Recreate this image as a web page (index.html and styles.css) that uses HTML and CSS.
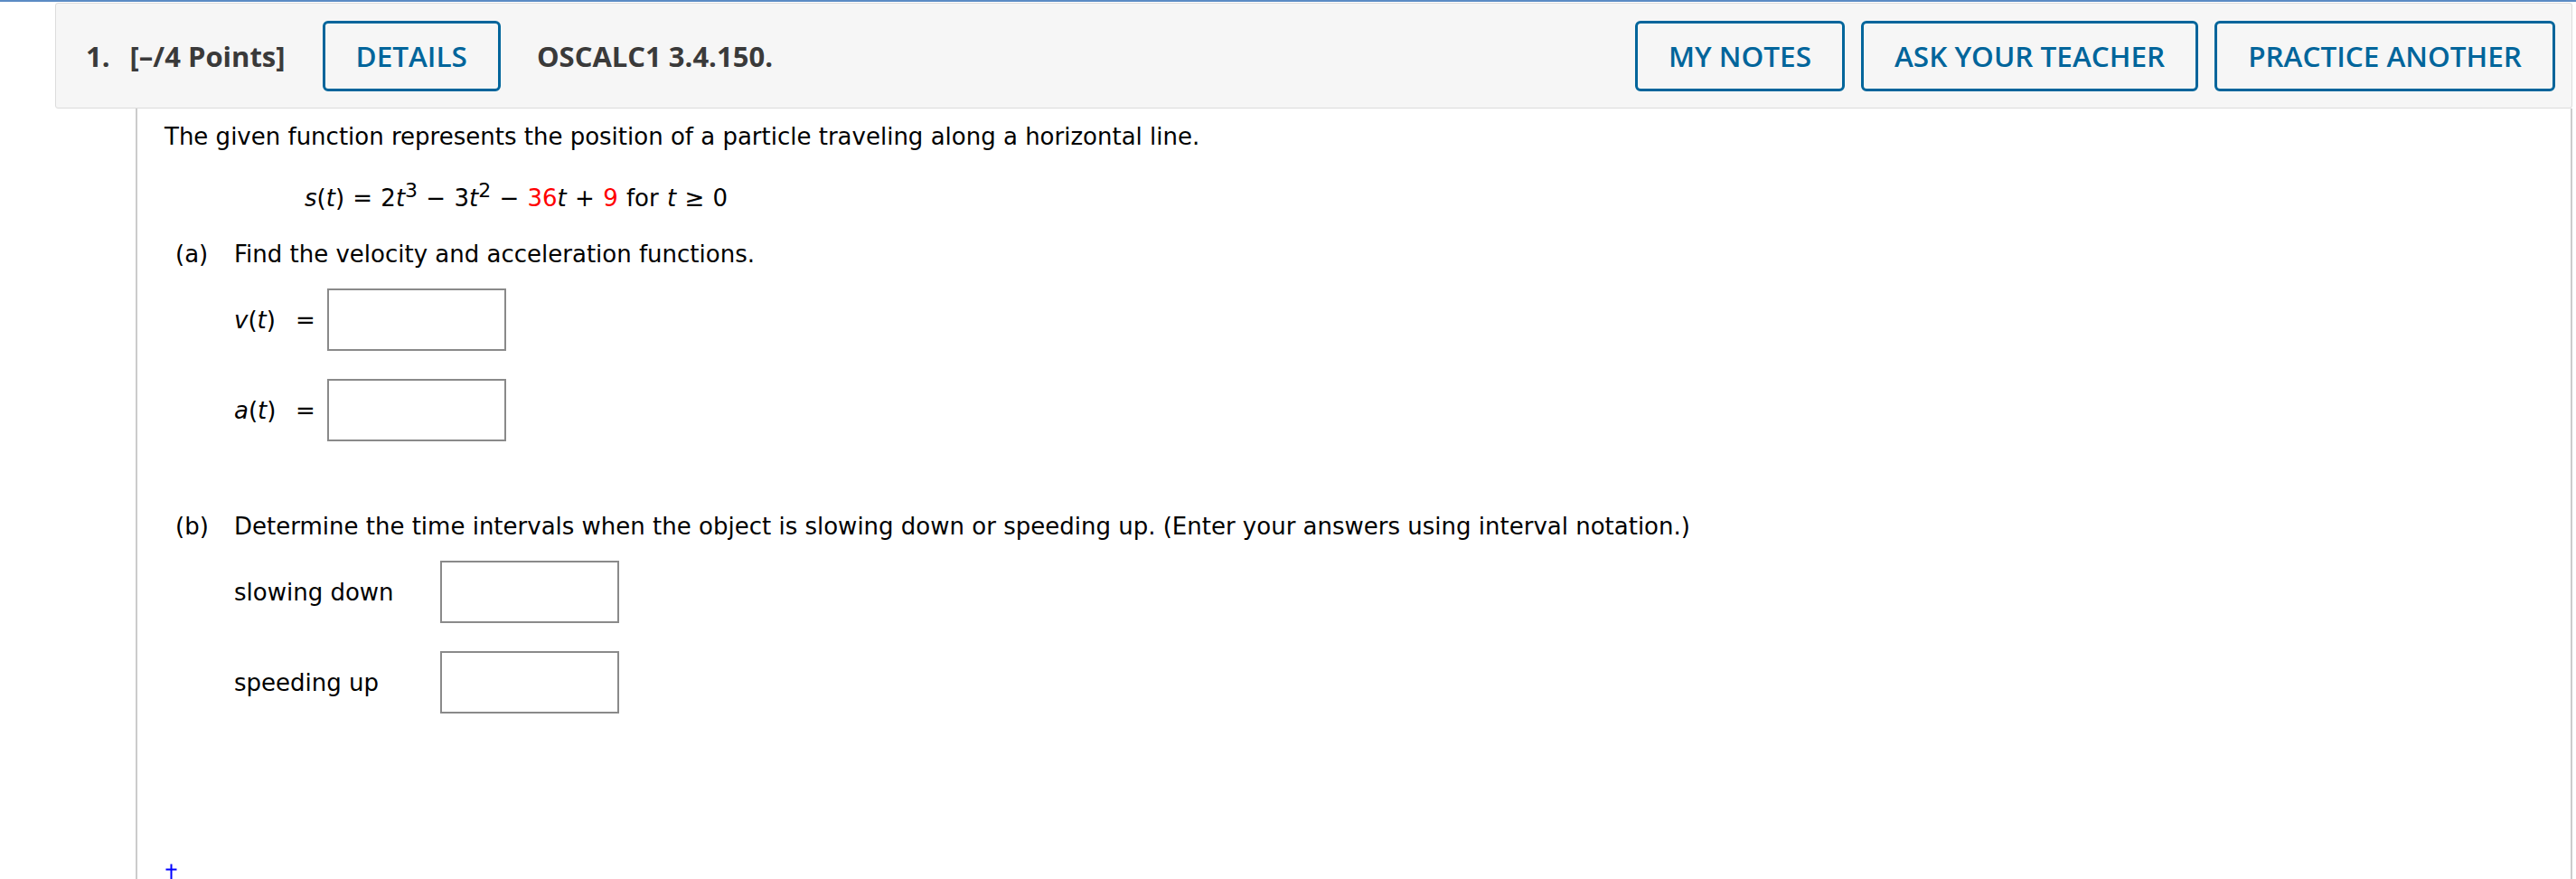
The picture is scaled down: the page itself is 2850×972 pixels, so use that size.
FILE: index.html
```html
<!DOCTYPE html>
<html lang="en">
<head>
  <meta charset="UTF-8">
  <title>OSCALC1 3.4.150.</title>
  <link rel="stylesheet" href="styles.css">
</head>
<body>
  <div class="top-line"></div>

  <div class="question">
    <div class="q-header">
      <span class="q-num">1.</span>
      <span class="q-points">[&ndash;/4 Points]</span>
      <button class="q-btn details-btn">DETAILS</button>
      <span class="q-code">OSCALC1 3.4.150.</span>
      <div class="q-actions">
        <button class="q-btn">MY NOTES</button>
        <button class="q-btn">ASK YOUR TEACHER</button>
        <button class="q-btn">PRACTICE ANOTHER</button>
      </div>
    </div>

    <div class="q-body">
      <p class="intro">The given function represents the position of a particle traveling along a horizontal line.</p>

      <p class="formula">
        <i>s</i>(<i>t</i>) = 2<i>t</i><sup>3</sup> &minus; 3<i>t</i><sup>2</sup> &minus; <span class="given">36</span><i>t</i> + <span class="given">9</span> for <i>t</i> &ge; 0
      </p>

      <div class="part">
        <div class="part-title"><span class="part-label">(a)</span>Find the velocity and acceleration functions.</div>
        <div class="answer-row">
          <span class="fn-label"><i>v</i>(<i>t</i>)</span><span class="eq">=</span><span class="ans-box"></span>
        </div>
        <div class="answer-row">
          <span class="fn-label"><i>a</i>(<i>t</i>)</span><span class="eq">=</span><span class="ans-box"></span>
        </div>
      </div>

      <div class="part part-b">
        <div class="part-title"><span class="part-label">(b)</span>Determine the time intervals when the object is slowing down or speeding up. (Enter your answers using interval notation.)</div>
        <div class="answer-row">
          <span class="word-label">slowing down</span><span class="ans-box"></span>
        </div>
        <div class="answer-row">
          <span class="word-label">speeding up</span><span class="ans-box"></span>
        </div>
      </div>

      <div class="expand">
        <svg width="14" height="20" viewBox="0 0 14 20">
          <path d="M0.5 6.5 H12.5 M6.5 0.5 V20" stroke="#0000ff" stroke-width="2" fill="none"/>
        </svg>
      </div>
    </div>
  </div>
</body>
</html>
```

FILE: styles.css
```css
html, body {
  overflow: hidden;
}

body {
  margin: 0;
  background-color: #fff;
  color: #000;
  font-family: "DejaVu Sans", Verdana, sans-serif;
  font-size: 26px;
}

.top-line {
  height: 2px;
  background-color: #5b8bc4;
}

.question {
  margin: 1px 4px 0 61px;
}

/* header bar */
.q-header {
  display: flex;
  align-items: center;
  height: 117px;
  box-sizing: border-box;
  padding: 0 18px 0 33px;
  background-color: #f6f6f6;
  border: 1px solid #dcdcdc;
  border-radius: 3px;
  font-family: "Open Sans", sans-serif;
  font-size: 31px;
  font-weight: 700;
  color: #3a3a3a;
}

.q-num {
  margin-right: 22px;
}

.q-btn {
  height: 78px;
  box-sizing: border-box;
  padding: 0 34px;
  background-color: transparent;
  border: 3px solid #00659b;
  border-radius: 6px;
  color: #00659b;
  font-family: "Open Sans", sans-serif;
  font-size: 31.5px;
  font-weight: 600;
  cursor: pointer;
}

.details-btn {
  margin: 0 40px 0 41px;
}

.q-actions {
  display: flex;
  gap: 18px;
  margin-left: auto;
}

/* question body */
.q-body {
  margin-left: 89px;
  padding: 16px 0 0 30px;
  border-left: 2px solid #ccc;
  border-right: 2px solid #ccc;
  line-height: 30px;
}

.q-body p {
  margin: 0;
}

.formula {
  margin-top: 38px !important;
  padding-left: 155px;
  word-spacing: 1px;
}

.formula sup {
  font-size: 22px;
  line-height: 0;
  vertical-align: 10px;
}

.given {
  color: #ff0000;
}

.part {
  margin-top: 32px;
  padding-left: 12px;
}

.part-b {
  margin-top: 79px;
}

.part-label {
  display: inline-block;
  width: 65px;
}

.answer-row {
  display: flex;
  align-items: center;
  margin-top: 31px;
  padding-left: 65px;
}

.part-title + .answer-row {
  margin-top: 23px;
}

.fn-label {
  width: 68px;
}

.eq {
  width: 35px;
}

.word-label {
  width: 228px;
}

.ans-box {
  width: 198px;
  height: 69px;
  box-sizing: border-box;
  border: 2px solid #8a8a8a;
}

.expand {
  margin-top: 162px;
  padding-left: 1px;
  height: 40px;
}
```
